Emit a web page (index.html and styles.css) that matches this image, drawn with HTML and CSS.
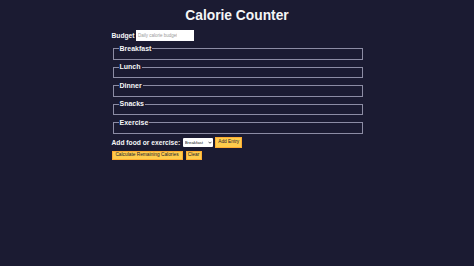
FILE: index.html
```html
<!DOCTYPE html>
<html lang="en">
<head>
<meta charset="utf-8">
<title>Calorie Counter</title>
<link rel="stylesheet" href="styles.css">
</head>
<body>
<main>
  <h1 class="title">Calorie Counter</h1>
  <div class="container">
    <form class="calorie-form">
      <div class="budget-row">
        <label class="label" for="budget">Budget</label>
        <input class="budget-input" id="budget" type="number" placeholder="Daily calorie budget">
      </div>
      <fieldset class="meal"><legend class="legend">Breakfast</legend><div class="meal-body"></div></fieldset>
      <fieldset class="meal"><legend class="legend">Lunch</legend><div class="meal-body"></div></fieldset>
      <fieldset class="meal"><legend class="legend">Dinner</legend><div class="meal-body"></div></fieldset>
      <fieldset class="meal"><legend class="legend">Snacks</legend><div class="meal-body"></div></fieldset>
      <fieldset class="meal"><legend class="legend">Exercise</legend><div class="meal-body"></div></fieldset>
      <div class="controls">
        <label class="label" for="entry-dropdown">Add food or exercise:</label>
        <span class="select-wrap">
          <select class="dropdown" id="entry-dropdown">
            <option>Breakfast</option>
            <option>Lunch</option>
            <option>Dinner</option>
            <option>Snacks</option>
            <option>Exercise</option>
          </select>
          <svg class="chevron" viewBox="0 0 8 5" aria-hidden="true"><path d="M1 1 L4 4 L7 1" fill="none" stroke="#111" stroke-width="1.4"/></svg>
        </span>
        <button class="btn btn-add" type="button">Add Entry</button>
      </div>
      <div class="actions">
        <button class="btn btn-calc" type="button">Calculate Remaining Calories</button>
        <button class="btn btn-clear" type="button">Clear</button>
      </div>
    </form>
  </div>
</main>
</body>
</html>
```
FILE: styles.css
```css
html, body {
  margin: 0;
  padding: 0;
}
body {
  background: #1b1b32;
  color: #f5f6f7;
  font-family: "Liberation Sans", Arial, sans-serif;
  width: 474px;
  height: 266px;
  overflow: hidden;
}
.title {
  margin: 8px 0 0;
  font-size: 13.8px;
  line-height: 16px;
  font-weight: bold;
  text-align: center;
}
.container {
  width: 251px;
  margin: 6px auto 0;
}
.calorie-form {
  margin: 0;
}
.label {
  font-weight: bold;
  font-size: 6.7px;
  line-height: 9px;
  white-space: nowrap;
}
.budget-row {
  display: flex;
  align-items: center;
  gap: 1.5px;
  height: 11px;
}
.budget-input {
  box-sizing: border-box;
  width: 58px;
  height: 11px;
  margin: 0;
  padding: 0 2px;
  border: 0;
  background: #ffffff;
  font-family: "Liberation Sans", Arial, sans-serif;
  font-size: 4.5px;
  color: #222;
}
.budget-input::placeholder {
  color: #9a9a9a;
}
.meal {
  box-sizing: border-box;
  height: 15px;
  margin: 0 0 3.5px 1px;
  padding: 0 5px;
  border: 1px solid #8c8ca4;
  min-inline-size: 0;
}
.meal:first-of-type {
  margin-top: 3.5px;
}
.legend {
  padding: 0 1px;
  font-weight: bold;
  font-size: 7px;
  line-height: 8px;
}
.meal-body {
  height: 5px;
}
.controls {
  display: flex;
  align-items: center;
  gap: 2px;
  height: 11px;
  margin-top: -0.5px;
}
.select-wrap {
  position: relative;
  display: block;
  width: 30px;
  height: 9px;
  margin-left: 1px;
}
.dropdown {
  box-sizing: border-box;
  appearance: none;
  -webkit-appearance: none;
  display: block;
  width: 30px;
  height: 9px;
  margin: 0;
  padding: 0 6px 0 1.5px;
  border: 0;
  border-radius: 1px;
  background: #ffffff;
  color: #111;
  font-family: "Liberation Sans", Arial, sans-serif;
  font-size: 4.3px;
  line-height: 9px;
}
.chevron {
  position: absolute;
  right: 1.5px;
  top: 3px;
  width: 4px;
  height: 3px;
  pointer-events: none;
}
.btn {
  box-sizing: border-box;
  margin: 0;
  padding: 0 1px;
  background: #fecc4c;
  border: 1px solid #feac32;
  color: #1b1b32;
  font-family: "Liberation Sans", Arial, sans-serif;
  font-size: 4.8px;
  line-height: 1;
  white-space: nowrap;
  cursor: pointer;
}
.btn-add {
  width: 27px;
  height: 11px;
}
.actions {
  display: flex;
  gap: 3px;
  margin-top: 3px;
}
.btn-calc {
  width: 71px;
  height: 9.5px;
}
.btn-clear {
  width: 16px;
  height: 9.5px;
}
```
